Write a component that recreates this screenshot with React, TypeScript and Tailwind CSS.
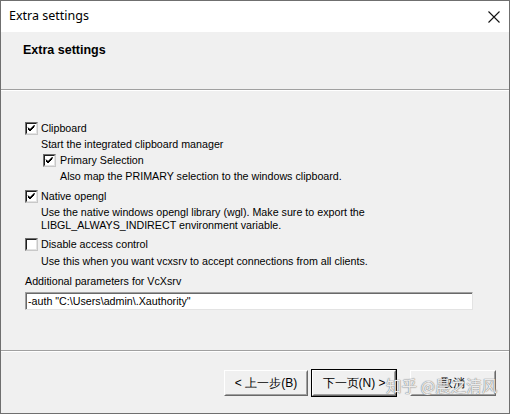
import React from "react";

const font = { fontFamily: '"Liberation Sans", Arial, sans-serif' };

function Check({ checked }: { checked: boolean }) {
  return (
    <div className="w-[13px] h-[13px] shrink-0 bg-white border border-t-[#6e6e6e] border-l-[#6e6e6e] border-r-[#c8c8c8] border-b-[#c8c8c8] flex items-center justify-center">
      <div className="w-[11px] h-[11px] border border-t-[#1e1e1e] border-l-[#1e1e1e] border-r-[#e3e3e3] border-b-[#e3e3e3] flex items-center justify-center">
        {checked && (
          <svg width="9" height="9" viewBox="0 0 9 9">
            <path d="M1 4 L3 6 L7.5 1.5 M1 5 L3 7 L7.5 2.5 M1 3.5 L3 5.5 L7.5 1" stroke="#000" strokeWidth="1" fill="none" />
          </svg>
        )}
      </div>
    </div>
  );
}

function Btn({ children, def, w }: { children: React.ReactNode; def?: boolean; w: string }) {
  return (
    <div
      className={
        "h-[28px] flex items-center justify-center text-[12px] text-black bg-[#f0f0f0] leading-none " +
        w +
        (def ? " border border-black" : " border border-transparent")
      }
      style={font}
    >
      <div className="w-full h-full border border-t-white border-l-white border-r-[#696969] border-b-[#696969] flex items-center justify-center">
        <div className="w-full h-full border border-t-[#f0f0f0] border-l-[#f0f0f0] border-r-[#a0a0a0] border-b-[#a0a0a0] flex items-center justify-center">
          {children}
        </div>
      </div>
    </div>
  );
}

export default function App() {
  return (
    <div className="w-[510px] h-[414px] bg-[#f0f0f0] border border-[#6f6f6f] flex flex-col relative overflow-hidden text-black" style={font}>
      {/* title bar */}
      <div className="h-[31px] bg-white flex items-center justify-between pl-[8px] pr-[9px] shrink-0">
        <span className="text-[12.5px]" style={{ fontFamily: '"Noto Sans", "Liberation Sans", sans-serif' }}>Extra settings</span>
        <svg width="12" height="12" viewBox="0 0 12 12">
          <path d="M0.5 0.5 L11.5 11.5 M11.5 0.5 L0.5 11.5" stroke="#111" strokeWidth="1.1" />
        </svg>
      </div>
      {/* header */}
      <div className="h-[58px] shrink-0 pl-[22px] pt-[10px] border-b border-[#a0a0a0]">
        <div className="text-[12.5px] leading-[16px] font-bold" style={{ fontFamily: '"Liberation Sans", Arial, sans-serif' }}>Extra settings</div>
      </div>
      <div className="h-px bg-white shrink-0" />
      {/* content */}
      <div className="flex-1 pl-[24px] pt-[29px] text-[10.7px] flex flex-col">
        <div className="h-[16px] flex items-center">
          <Check checked />
          <span className="ml-[3px]">Clipboard</span>
        </div>
        <div className="h-[16px] flex items-center pl-[16px]">Start the integrated clipboard manager</div>
        <div className="h-[16px] flex items-center pl-[18px]">
          <Check checked />
          <span className="ml-[4px]">Primary Selection</span>
        </div>
        <div className="h-[16px] flex items-center pl-[35px]">Also map the PRIMARY selection to the windows clipboard.</div>
        <div className="h-[16px] flex items-center mt-[4px]">
          <Check checked />
          <span className="ml-[3px]">Native opengl</span>
        </div>
        <div className="mt-[2px] pl-[16px] leading-[13px]">
          <div>Use the native windows opengl library (wgl). Make sure to export the</div>
          <div>LIBGL_ALWAYS_INDIRECT environment variable.</div>
        </div>
        <div className="h-[16px] flex items-center mt-[4px]">
          <Check checked={false} />
          <span className="ml-[3px]">Disable access control</span>
        </div>
        <div className="h-[16px] flex items-center pl-[16px] mt-[1px]">Use this when you want vcxsrv to accept connections from all clients.</div>
        <div className="h-[16px] flex items-center mt-[4px]">Additional parameters for VcXsrv</div>
        <div className="mt-[3px] w-[448px] h-[18px] bg-white border border-t-[#a0a0a0] border-l-[#a0a0a0] border-r-[#e3e3e3] border-b-[#e3e3e3] flex items-center">
          <div className="h-full border-t border-l border-[#696969] w-full flex items-center pl-[1px]">-auth "C:\Users\admin\.Xauthority"</div>
        </div>
      </div>
      {/* separator */}
      <div className="h-px bg-[#a0a0a0] shrink-0" />
      <div className="h-px bg-white shrink-0" />
      {/* buttons */}
      <div className="h-[61px] shrink-0 flex items-start justify-end pr-[12px] pt-[17px]">
        <div className="flex">
          <Btn w="w-[86px]">&lt; 上一步(B)</Btn>
          <div className="ml-[2px]">
            <Btn def w="w-[86px]">下一页(N) &gt;</Btn>
          </div>
          <div className="ml-[12px]">
            <Btn w="w-[88px]">取消</Btn>
          </div>
        </div>
      </div>
      {/* watermark */}
      <div
        className="absolute left-[385px] top-[374px] whitespace-nowrap text-[15.5px] leading-[20px] text-white/85 [text-shadow:0_0_1px_#777,0_0_1px_#777]"
        style={{ fontFamily: '"Noto Sans CJK SC", sans-serif' }}
      >
        知乎 @晨之清风
      </div>
    </div>
  );
}
